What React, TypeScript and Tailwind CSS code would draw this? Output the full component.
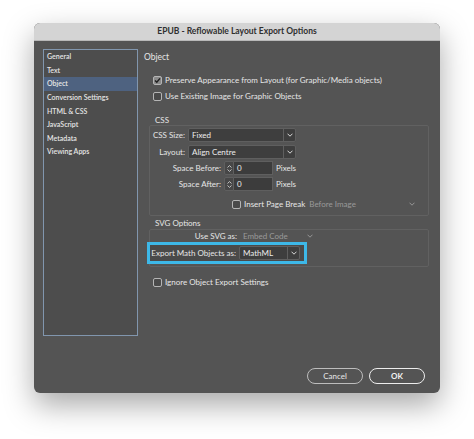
const Chevron = ({ dim }: { dim?: boolean }) => (
  <svg width="6" height="4" viewBox="0 0 6 4" className={dim ? "opacity-50" : ""}>
    <polyline points="0.5,0.7 3,3.2 5.5,0.7" fill="none" stroke="#d8d8d8" strokeWidth="1" />
  </svg>
);

const Checkbox = ({ checked }: { checked?: boolean }) => (
  <div
    className={`w-[9px] h-[9px] rounded-[2px] border border-[#b5b5b5] flex items-center justify-center ${
      checked ? "bg-[#8a8a8a]" : "bg-[#4a4a4a]"
    }`}
  >
    {checked && (
      <svg width="7" height="7" viewBox="0 0 7 7">
        <polyline points="1,3.6 2.8,5.3 6,1.4" fill="none" stroke="#1e1e1e" strokeWidth="1.4" />
      </svg>
    )}
  </div>
);

const Select = ({ value, width }: { value: string; width: string }) => (
  <div className={`${width} h-[14px] flex items-stretch bg-[#3e3e3e] border border-[#5f5f5f] rounded-[2px]`}>
    <div className="flex-1 px-[3px] flex items-center text-[#ececec]">{value}</div>
    <div className="w-[12px] border-l border-[#5f5f5f] flex items-center justify-center">
      <Chevron />
    </div>
  </div>
);

const Stepper = () => (
  <div className="flex items-stretch h-[14px]">
    <div className="w-[10px] border border-[#5f5f5f] bg-[#474747] rounded-l-[2px] flex flex-col items-center justify-center gap-[1px]">
      <svg width="5" height="3" viewBox="0 0 5 3">
        <polyline points="0.5,2.5 2.5,0.6 4.5,2.5" fill="none" stroke="#cfcfcf" strokeWidth="0.9" />
      </svg>
      <svg width="5" height="3" viewBox="0 0 5 3">
        <polyline points="0.5,0.5 2.5,2.4 4.5,0.5" fill="none" stroke="#cfcfcf" strokeWidth="0.9" />
      </svg>
    </div>
    <div className="w-[39px] bg-[#3c3c3c] border border-l-0 border-[#5f5f5f] px-[3px] flex items-center text-[#ececec]">
      0
    </div>
  </div>
);

const navItems = [
  "General",
  "Text",
  "Object",
  "Conversion Settings",
  "HTML & CSS",
  "JavaScript",
  "Metadata",
  "Viewing Apps",
];

export default function App() {
  return (
    <div className="w-[474px] h-[439px] bg-white pt-[23px] pl-[34px] font-['Lato','Open_Sans',sans-serif] text-[8px] text-[#e6e6e6] leading-none">
      <div className="w-[406px] h-[370px] rounded-[6px] overflow-hidden flex flex-col bg-[#545454] shadow-[0_12px_30px_rgba(0,0,0,0.34)]">
        <div className="h-[18px] bg-[#d4d4d4] border-b border-[#b8b8b8] flex items-center justify-center font-bold text-[8.5px] text-[#2f2f2f]">
          EPUB - Reflowable Layout Export Options
        </div>

        <div className="flex-1 flex pl-[9px] pt-[8px]">
          {/* sidebar */}
          <div className="w-[95px] h-[287px] border border-[#8196ae] bg-[#4d4d4d] text-[7px] font-semibold">
            {navItems.map((item) => (
              <div
                key={item}
                className={`h-[13.6px] px-[3px] flex items-center ${
                  item === "Object" ? "bg-[#4e6280]" : ""
                }`}
              >
                {item}
              </div>
            ))}
          </div>

          {/* main panel */}
          <div className="flex-1 flex flex-col pl-[6px] pr-[7px]">
            <div className="h-[16px] flex items-center text-[8.5px]">Object</div>

            <div className="mt-[9px] h-[12px] flex items-center gap-[3px] pl-[9px]">
              <Checkbox checked />
              <span>Preserve Appearance from Layout (for Graphic/Media objects)</span>
            </div>
            <div className="mt-[4px] h-[12px] flex items-center gap-[3px] pl-[9px]">
              <Checkbox />
              <span>Use Existing Image for Graphic Objects</span>
            </div>

            {/* CSS group */}
            <div className="mt-[13px] h-[10px] flex items-center pl-[11px]">CSS</div>
            <div className="ml-[5px] mr-[4px] h-[91px] border border-[#616161] rounded-[2px] flex flex-col">
              <div className="mt-[2px] h-[14px] flex items-center">
                <span className="w-[38px] text-right pr-[3px]">CSS Size:</span>
                <Select value="Fixed" width="w-[108px]" />
              </div>
              <div className="mt-[3px] h-[14px] flex items-center">
                <span className="w-[38px] text-right pr-[3px]">Layout:</span>
                <Select value="Align Centre" width="w-[108px]" />
              </div>
              <div className="mt-[2px] h-[14px] flex items-center">
                <span className="w-[74px] text-right pr-[3px]">Space Before:</span>
                <Stepper />
                <span className="ml-[3px]">Pixels</span>
              </div>
              <div className="mt-[2px] h-[14px] flex items-center">
                <span className="w-[74px] text-right pr-[3px]">Space After:</span>
                <Stepper />
                <span className="ml-[3px]">Pixels</span>
              </div>
              <div className="mt-[6px] h-[14px] flex items-center pl-[82px]">
                <Checkbox />
                <span className="ml-[3px]">Insert Page Break</span>
                <div className="ml-[2px] w-[110px] h-[14px] flex items-center justify-between px-[2px] text-[#9a9a9a]">
                  <span>Before Image</span>
                  <Chevron dim />
                </div>
              </div>
            </div>

            {/* SVG group */}
            <div className="mt-[1px] h-[12px] flex items-center pl-[11px]">SVG Options</div>
            <div className="ml-[5px] mr-[4px] h-[38px] border border-[#616161] rounded-[2px] flex flex-col">
              <div className="h-[12px] flex items-center">
                <span className="w-[91px] text-right pr-[4px]">Use SVG as:</span>
                <div className="w-[72px] flex items-center justify-between pl-[2px] text-[#9a9a9a]">
                  <span>Embed Code</span>
                  <Chevron dim />
                </div>
              </div>
              <div className="-ml-[3px] w-[160px] h-[22px] border-[3px] border-[#3db8e8] bg-[#4a4a4a] flex items-center">
                <span className="w-[89px] text-right pr-[3px]">Export Math Objects as:</span>
                <Select value="MathML" width="w-[61px]" />
              </div>
            </div>

            <div className="mt-[9px] h-[12px] flex items-center gap-[3px] pl-[9px]">
              <Checkbox />
              <span>Ignore Object Export Settings</span>
            </div>
          </div>
        </div>

        {/* footer */}
        <div className="flex justify-end gap-[6px] pr-[15px] pb-[9px]">
          <div className="w-[56px] h-[16px] rounded-full border border-[#bdbdbd] flex items-center justify-center text-[#e8e8e8]">
            Cancel
          </div>
          <div className="w-[56px] h-[16px] rounded-full border-[1.5px] border-[#ededed] flex items-center justify-center text-[#f2f2f2] font-bold">
            OK
          </div>
        </div>
      </div>
    </div>
  );
}
